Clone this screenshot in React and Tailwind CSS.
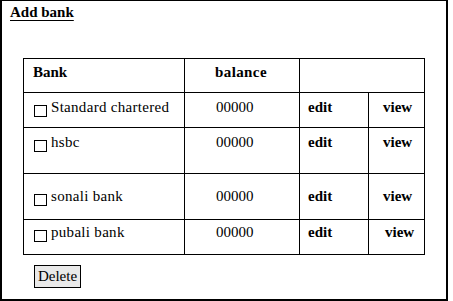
const rows = [
    { name: 'Standard chartered', h: 'h-[35px]', pt: 'pt-[6px]', viewPl: 'pl-[14px]' },
    { name: 'hsbc', h: 'h-[46px]', pt: 'pt-[6px]', viewPl: 'pl-[14px]' },
    { name: 'sonali bank', h: 'h-[46px]', pt: 'pt-[14px]', viewPl: 'pl-[14px]' },
    { name: 'pubali bank', h: 'h-[35px]', pt: 'pt-[4px]', viewPl: 'pl-[16px]' },
];

function Row({ row }) {
    const cell = `border-r border-b border-black ${row.h} ${row.pt}`;
    return (<>
        <div className={`${cell} pl-[10px] flex items-start`}>
            <span className="mt-[6px] mr-[4px] w-[13px] h-[12px] border border-black bg-white shrink-0"></span>
            <span className="tracking-[0.3px]">{row.name}</span>
        </div>
        <div className={`${cell} pl-[31px]`}>00000</div>
        <div className={`${cell} pl-[8px] font-bold`}>edit</div>
        <div className={`${cell} ${row.viewPl} font-bold`}>view</div>
    </>);
}

export default function App() {
    return (<div className="w-[448px] h-[301px] border-x-2 border-b-2 border-t border-black bg-white text-black text-[15px] leading-[17px] font-['Liberation_Serif','Times_New_Roman',serif]">
        <div className="pl-[8px] pt-[3px]">
            <span className="font-bold underline underline-offset-[3px] decoration-1">Add bank</span>
        </div>
        <div className="ml-[21px] mt-[37px] w-[402px] grid grid-cols-[161px_115px_69px_56px] border-l border-t border-black">
            <div className="h-[34px] pt-[5px] pl-[9px] border-r border-b border-black font-bold">Bank</div>
            <div className="h-[34px] pt-[5px] pl-[30px] border-r border-b border-black font-bold tracking-[0.4px]">balance</div>
            <div className="h-[34px] col-span-2 border-r border-b border-black"></div>
            {rows.map((r) => <Row key={r.name} row={r}/>)}
        </div>
        <div className="ml-[32px] mt-[10px]">
            <button className="w-[47px] h-[23px] border border-black bg-[#e9e9e9] text-[15px] leading-[17px] px-0 font-['Liberation_Serif','Times_New_Roman',serif]">
                Delete
            </button>
        </div>
    </div>);
}
